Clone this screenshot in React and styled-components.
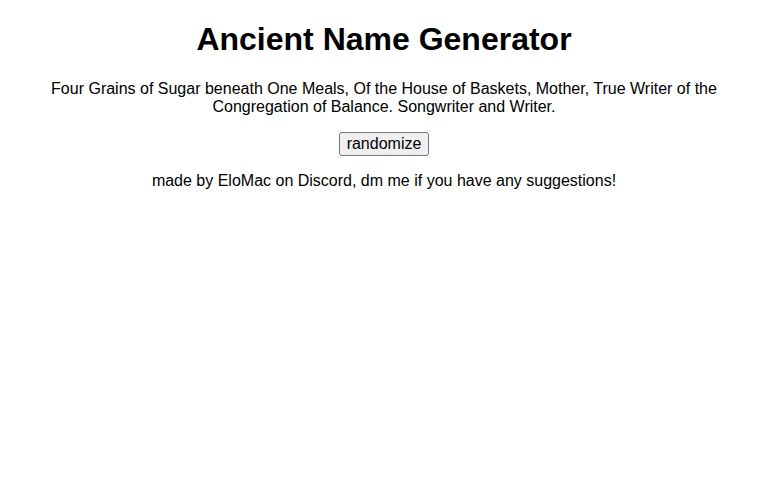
import React, { useState } from 'react';
import styled, { createGlobalStyle } from 'styled-components';

const GlobalStyle = createGlobalStyle`
  body {
    margin: 0;
    background: #fff;
    color: #000;
    font-family: "Liberation Sans", Arial, sans-serif;
  }
`;

const Page = styled.div`
  padding: 0 8px;
  text-align: center;
`;

const Title = styled.h1`
  font-size: 32px;
  font-weight: bold;
  margin: 21.44px 0;
`;

const Text = styled.p`
  font-size: 16px;
  margin: 16px 0;
`;

const RandomButton = styled.button`
  font-family: "Liberation Sans", Arial, sans-serif;
  font-size: 16px;
  color: #000;
  background: #efefef;
  border: 1px solid #767676;
  border-radius: 3px;
  padding: 2px 7px;
  cursor: pointer;

  &:hover {
    background: #e5e5e5;
  }
`;

const names = [
  'Four Grains of Sugar beneath One Meals, Of the House of Baskets, Mother, True Writer of the Congregation of Balance. Songwriter and Writer.',
  'Seven Stones upon the River, Of the House of Lanterns, Elder, Keeper of the Quiet Hall. Weaver and Scribe.',
  'Two Feathers above the Harvest, Of the House of Bells, Daughter, First Singer of the Circle of Dawn. Potter and Poet.',
];

export default function App() {
  const [index, setIndex] = useState(0);

  const randomize = () => {
    let next = Math.floor(Math.random() * names.length);
    if (next === index) next = (next + 1) % names.length;
    setIndex(next);
  };

  return (
    <Page>
      <GlobalStyle />
      <Title>Ancient Name Generator</Title>
      <Text>{names[index]}</Text>
      <RandomButton onClick={randomize}>randomize</RandomButton>
      <Text>made by EloMac on Discord, dm me if you have any suggestions!</Text>
    </Page>
  );
}
